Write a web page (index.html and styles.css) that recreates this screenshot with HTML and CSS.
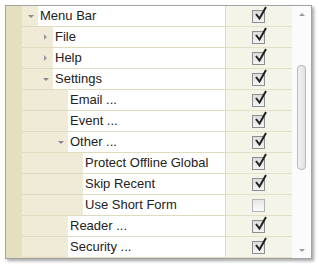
FILE: index.html
```html
<!DOCTYPE html>
<html lang="en">
<head>
    <meta charset="UTF-8">
    <title>Menu Settings</title>
    <link rel="stylesheet" href="styles.css">
</head>
<body>

    <div class="tree-box">
        <div class="rows">
            <div class="row lvl0"><span class="gutter"></span><span class="node"><i class="arrow open"></i><span class="label">Menu Bar</span></span><span class="check on"></span></div>
            <div class="row lvl1"><span class="gutter"></span><span class="node"><i class="arrow closed"></i><span class="label">File</span></span><span class="check on"></span></div>
            <div class="row lvl1"><span class="gutter"></span><span class="node"><i class="arrow closed"></i><span class="label">Help</span></span><span class="check on"></span></div>
            <div class="row lvl1"><span class="gutter"></span><span class="node"><i class="arrow open"></i><span class="label">Settings</span></span><span class="check on"></span></div>
            <div class="row lvl2"><span class="gutter"></span><span class="node"><i class="arrow"></i><span class="label">Email ...</span></span><span class="check on"></span></div>
            <div class="row lvl2"><span class="gutter"></span><span class="node"><i class="arrow"></i><span class="label">Event ...</span></span><span class="check on"></span></div>
            <div class="row lvl2"><span class="gutter"></span><span class="node"><i class="arrow open"></i><span class="label">Other ...</span></span><span class="check on"></span></div>
            <div class="row lvl3"><span class="gutter"></span><span class="node"><i class="arrow"></i><span class="label">Protect Offline Global</span></span><span class="check on"></span></div>
            <div class="row lvl3"><span class="gutter"></span><span class="node"><i class="arrow"></i><span class="label">Skip Recent</span></span><span class="check on"></span></div>
            <div class="row lvl3"><span class="gutter"></span><span class="node"><i class="arrow"></i><span class="label">Use Short Form</span></span><span class="check"></span></div>
            <div class="row lvl2"><span class="gutter"></span><span class="node"><i class="arrow"></i><span class="label">Reader ...</span></span><span class="check on"></span></div>
            <div class="row lvl2"><span class="gutter"></span><span class="node"><i class="arrow"></i><span class="label">Security ...</span></span><span class="check on"></span></div>
        </div>
        <div class="scrollbar">
            <i class="scroll-up"></i>
            <div class="thumb"></div>
            <i class="scroll-down"></i>
        </div>
    </div>

</body>
</html>
```

FILE: styles.css
```css
body {
    margin: 0;
    padding: 5px;
    background: #ffffff;
    font-family: "Liberation Sans", Arial, sans-serif;
    font-size: 13px;
    color: #222222;
}

.tree-box {
    display: flex;
    width: 305px;
    height: 252px;
    border: 1px solid #a3a3a3;
    box-shadow: 2px 2px 3px rgba(0, 0, 0, 0.35);
    background: #ffffff;
}

.rows {
    display: flex;
    flex-direction: column;
    width: 286px;
}

.row {
    display: flex;
    height: 21px;
}

.gutter {
    width: 16px;
    background: #e4dfbd;
}

.node {
    display: flex;
    width: 203px;
    background: #efebd6;
    border-bottom: 1px solid #e0dbbf;
    box-sizing: border-box;
}

.lvl1 .node { padding-left: 15px; }
.lvl2 .node { padding-left: 30px; }
.lvl3 .node { padding-left: 45px; }

.arrow {
    width: 16px;
    position: relative;
}

.arrow.open::after {
    content: "";
    position: absolute;
    left: 6px;
    top: 9px;
    border-left: 3px solid transparent;
    border-right: 3px solid transparent;
    border-top: 3px solid #8a8a8a;
}

.arrow.closed::after {
    content: "";
    position: absolute;
    left: 7px;
    top: 7px;
    border-top: 3px solid transparent;
    border-bottom: 3px solid transparent;
    border-left: 3px solid #9a9a9a;
}

.label {
    flex: 1;
    background: #ffffff;
    padding-left: 2px;
    line-height: 20px;
    white-space: nowrap;
}

.check {
    width: 67px;
    background: #f5f4e8;
    border-left: 1px solid #e0dbbf;
    border-bottom: 1px solid #e4e0c8;
    box-sizing: border-box;
    position: relative;
}

.check::before {
    content: "";
    position: absolute;
    left: 26px;
    top: 4px;
    width: 11px;
    height: 11px;
    border: 1px solid #b4b4b4;
    background: linear-gradient(#e6e6e6, #fbfbfb);
}

.check.on::before {
    border-color: #8e8e8e;
    background: linear-gradient(#dcdcdc, #f4f4f4);
}

.check.on::after {
    content: "";
    position: absolute;
    left: 29px;
    top: 0px;
    width: 12px;
    height: 14px;
    background: url("data:image/svg+xml;utf8,<svg xmlns='http://www.w3.org/2000/svg' width='12' height='14'><path d='M1 8 L4.5 12.5 L11 1' fill='none' stroke='%23222' stroke-width='2'/></svg>") no-repeat;
}

.scrollbar {
    width: 19px;
    position: relative;
    background: #fbfbfb;
}

.scroll-up::after,
.scroll-down::after {
    content: "";
    position: absolute;
    left: 7px;
    border-left: 3px solid transparent;
    border-right: 3px solid transparent;
}

.scroll-up::after {
    top: 7px;
    border-bottom: 3px solid #9a9a9a;
}

.scroll-down::after {
    bottom: 6px;
    border-top: 3px solid #9a9a9a;
}

.thumb {
    position: absolute;
    left: 5px;
    top: 59px;
    width: 7px;
    height: 103px;
    border: 1px solid #b8b8b8;
    border-radius: 4px;
    background: linear-gradient(to right, #f0f0f0, #e2e2e2);
}
```
